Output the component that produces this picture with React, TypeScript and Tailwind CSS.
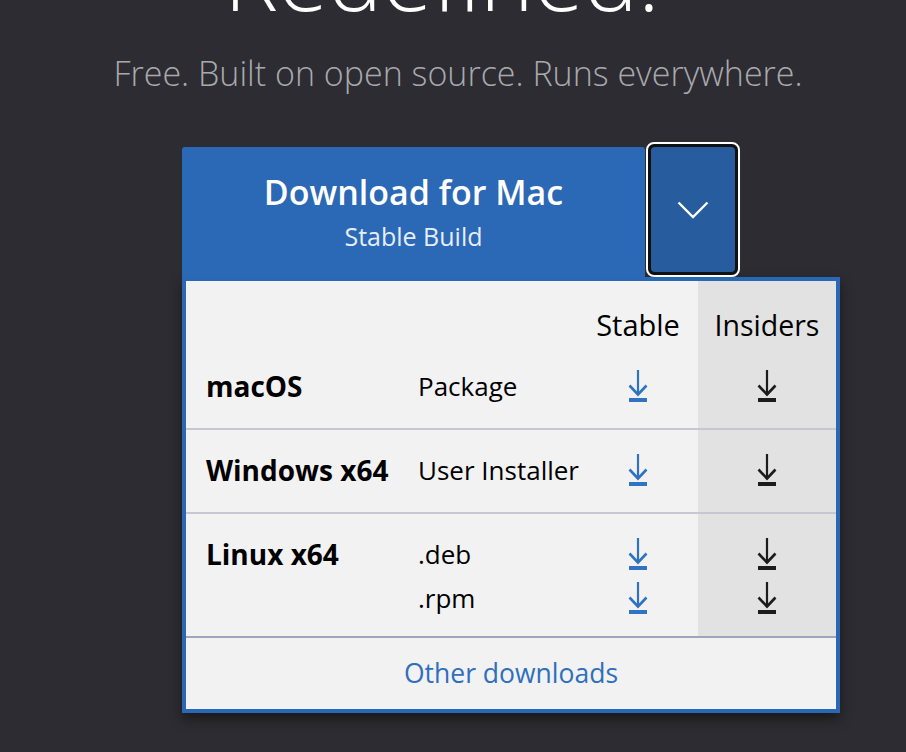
import React from "react";

const font = { fontFamily: '"Open Sans", "Noto Sans", sans-serif' };

function DownloadIcon({ color }: { color: string }) {
  return (
    <svg width="20" height="32" viewBox="0 0 20 32" fill="none">
      <line x1="10" y1="0" x2="10" y2="25" stroke={color} strokeWidth="2.2" />
      <polyline points="1.5,15.5 10,24.5 18.5,15.5" stroke={color} strokeWidth="2.6" fill="none" />
      <rect x="1" y="28" width="18" height="4" fill={color} />
    </svg>
  );
}

function Row({
  label,
  items,
  height,
  pad,
  last,
}: {
  label: string;
  items: string[];
  height: string;
  pad: string;
  last?: boolean;
}) {
  return (
    <div
      className={`grid grid-cols-[232px_160px_120px_138px] border-b-2 ${height} ${
        last ? "border-[#a3a3bb]" : "border-[#c6c6d4]"
      }`}
    >
      <div className={`pl-5 ${pad}`}>
        <div className="text-[28px] leading-[36px] font-bold text-black whitespace-nowrap">{label}</div>
      </div>
      <div className={`flex flex-col gap-2 ${pad}`}>
        {items.map((t) => (
          <div key={t} className="text-[26px] leading-[36px] text-black whitespace-nowrap">
            {t}
          </div>
        ))}
      </div>
      <div className={`flex flex-col items-center gap-2 ${pad}`}>
        {items.map((t) => (
          <div key={t} className="h-[36px] flex items-center">
            <DownloadIcon color="#2f73c2" />
          </div>
        ))}
      </div>
      <div className={`flex flex-col items-center gap-2 bg-[#e2e2e2] ${pad}`}>
        {items.map((t) => (
          <div key={t} className="h-[36px] flex items-center">
            <DownloadIcon color="#1c1c1c" />
          </div>
        ))}
      </div>
    </div>
  );
}

export default function App() {
  return (
    <div className="w-[906px] h-[752px] overflow-hidden bg-[#2c2c32]" style={font}>
      <div className="h-[14px] relative">
        <div className="absolute left-[224px] bottom-[-8px] text-[91px] leading-none font-light text-white whitespace-nowrap">
          Redefined.
        </div>
      </div>
      <div className="mt-[39px] pl-[10px] text-center text-[34px] leading-[40px] font-light text-[#a9a9ad] whitespace-nowrap">
        Free. Built on open source. Runs everywhere.
      </div>
      <div className="mt-[49px] ml-[182px] flex items-end">
        <div className="w-[463px] h-[130px] bg-[#2b68b5] rounded-tl-[3px] rounded-tr-[3px] flex flex-col items-center justify-center text-white">
          <div className="text-[34px] leading-[40px] font-semibold whitespace-nowrap">Download for Mac</div>
          <div className="text-[25px] leading-[32px] mt-[8px] text-[#e6eefa] whitespace-nowrap">Stable Build</div>
        </div>
        <div className="ml-[1px] w-[94px] h-[135px] rounded-[8px] border-2 border-white bg-[#111] p-[3px]">
          <div className="w-full h-full rounded-[4px] bg-[#275d9f] flex items-center justify-center">
            <svg width="32" height="18" viewBox="0 0 32 18" fill="none">
              <polyline points="1.5,1.5 16,16 30.5,1.5" stroke="white" strokeWidth="2.4" />
            </svg>
          </div>
        </div>
      </div>
      <div className="ml-[182px] w-[658px] border-4 border-[#2a68b5] bg-[#f2f2f2] shadow-[0_6px_12px_rgba(0,0,0,0.45)]">
        <div className="grid grid-cols-[232px_160px_120px_138px] h-[63px]">
          <div />
          <div />
          <div className="flex items-end justify-center text-[29px] leading-[38px] text-black">Stable</div>
          <div className="flex items-end justify-center text-[28.5px] leading-[38px] text-black bg-[#e2e2e2]">Insiders</div>
        </div>
        <Row label="macOS" items={["Package"]} height="h-[86px]" pad="pt-[24px]" />
        <Row label="Windows x64" items={["User Installer"]} height="h-[84px]" pad="pt-[22px]" />
        <Row label="Linux x64" items={[".deb", ".rpm"]} height="h-[124px]" pad="pt-[22px]" last />
        <div className="h-[71px] flex items-center justify-center text-[26.5px] text-[#2f6fbc]">
          Other downloads
        </div>
      </div>
    </div>
  );
}
